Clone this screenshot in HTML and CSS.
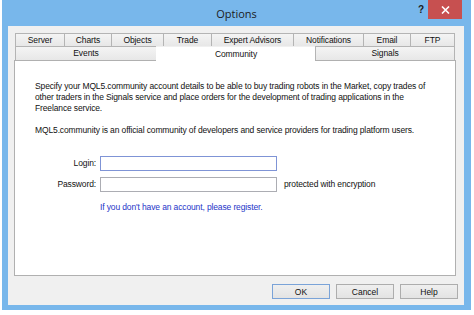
FILE: index.html
```html
<!DOCTYPE html>
<html lang="en">
<head>
    <meta charset="UTF-8">
    <title>Options</title>
    <link rel="stylesheet" href="styles.css">
</head>
<body>
    <div class="window">
        <div class="titlebar">
            <span></span>
            <span class="title">Options</span>
            <div class="controls">
                <span class="help-btn">?</span>
                <span class="close-btn">
                    <svg width="9" height="8" viewBox="0 0 9 8"><path d="M1 0.5 L8 7.5 M8 0.5 L1 7.5" stroke="#fff" stroke-width="1.6"/></svg>
                </span>
            </div>
        </div>
        <div class="client">
            <div class="tabs">
                <div class="tab-row back">
                    <div class="tab">Server</div>
                    <div class="tab">Charts</div>
                    <div class="tab">Objects</div>
                    <div class="tab">Trade</div>
                    <div class="tab">Expert Advisors</div>
                    <div class="tab">Notifications</div>
                    <div class="tab">Email</div>
                    <div class="tab">FTP</div>
                </div>
                <div class="tab-row front">
                    <div class="tab">Events</div>
                    <div class="tab active">Community</div>
                    <div class="tab">Signals</div>
                </div>
            </div>
            <div class="panel">
                <p>Specify your MQL5.community account details to be able to buy trading robots in the Market, copy trades of other traders in the Signals service and place orders for the development of trading applications in the Freelance service.</p>
                <p>MQL5.community is an official community of developers and service providers for trading platform users.</p>
                <div class="form">
                    <label for="login">Login:</label>
                    <input type="text" id="login" class="focused">
                    <span></span>
                    <label for="password">Password:</label>
                    <input type="password" id="password">
                    <span class="note">protected with encryption</span>
                    <span></span>
                    <a class="register" href="#">If you don't have an account, please register.</a>
                </div>
            </div>
            <div class="buttons">
                <button class="btn default">OK</button>
                <button class="btn">Cancel</button>
                <button class="btn">Help</button>
            </div>
        </div>
    </div>
</body>
</html>
```

FILE: styles.css
```css
body { margin: 0; background: #fff; font-family: "Liberation Sans", Arial, sans-serif; color: #000; }
.window { margin-left: 2px; width: 469px; height: 310px; background: #78b7eb; display: flex; flex-direction: column; padding: 0 7px 5px 6px; box-sizing: border-box; }

.titlebar { height: 26px; display: grid; grid-template-columns: 1fr auto 1fr; margin: 0 -7px 0 -6px; }
.title { font-family: "Open Sans", sans-serif; font-size: 11px; line-height: 28px; color: #1c1c1c; }
.controls { display: flex; justify-content: flex-end; align-items: flex-start; padding-right: 9px; }
.help-btn { font-family: "Liberation Sans", sans-serif; font-weight: bold; font-size: 10px; line-height: 19px; color: #1c1c1c; margin-right: 4px; }
.close-btn { width: 34px; height: 19px; background: #c75050; display: flex; align-items: center; justify-content: center; }

.client { flex: 1; background: #f0f0f0; display: flex; flex-direction: column; }

.tabs { margin: 7px 0 0 7px; }
.tab-row { display: grid; width: 440px; }
.tab-row.back { grid-template-columns: 49px 47px 52px 48px 82px 70px 47px 45px; height: 13px; }
.tab-row.front { grid-template-columns: 141px 159px 140px; height: 14px; }
.tab { font-size: 8.5px; letter-spacing: -0.1px; text-align: center; color: #111; background: linear-gradient(#f4f4f4, #e7e7e7); border: 1px solid #b4b4b4; border-right-width: 0; border-bottom-width: 0; box-sizing: border-box; line-height: 12px; }
.tab:last-child { border-right-width: 1px; }
.tab-row.front .tab { line-height: 13px; }
.tab.active { background: #fff; margin-top: 1px; border-color: #fff; line-height: 12px; position: relative; z-index: 1; margin-bottom: -1px; }

.panel { margin-left: 6px; width: 442px; height: 216px; background: #fff; border: 1px solid #b0b0b0; box-sizing: border-box; padding: 20px 16px 0 20px; font-size: 8.5px; letter-spacing: -0.13px; line-height: 11px; color: #111; }
.panel p { margin: 0 0 11px 0; }

.form { display: grid; grid-template-columns: 61px 177px auto; column-gap: 4px; row-gap: 6px; margin-top: 20px; align-items: center; }
.form label { text-align: right; }
.form input { height: 15px; box-sizing: border-box; border: 1px solid #acadb3; padding: 0; margin: 0; background: #fff; }
.form input.focused { border-color: #7f94d6; }
.note { padding-left: 3px; }
.register { grid-column: 2 / 4; color: #2535c8; text-decoration: none; margin-top: 4px; }

.buttons { display: flex; justify-content: flex-end; gap: 6px; margin: 8px 6px 0 0; }
.btn { width: 58px; height: 15px; padding: 0; font-family: "Liberation Sans", Arial, sans-serif; font-size: 8.5px; color: #111; background: linear-gradient(#efefef, #e3e3e3); border: 1px solid #adadad; border-radius: 0; }
.btn.default { border-color: #7aa3d8; }
```
